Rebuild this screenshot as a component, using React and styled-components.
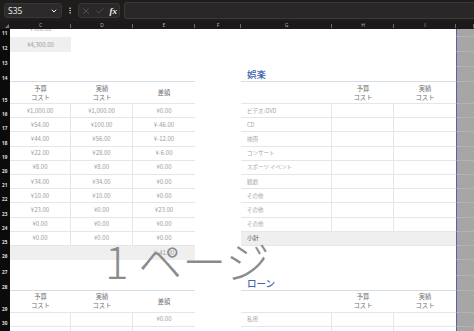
import React from 'react';
import styled, { createGlobalStyle } from 'styled-components';
import { X, Check, ChevronDown, EllipsisVertical } from 'lucide-react';

const Global = createGlobalStyle`
  html, body { margin: 0; padding: 0; background: #1f1c1c; overflow: hidden; }
  body { font-family: "Noto Sans CJK JP", "Noto Sans", sans-serif; }
`;

const LINE = '#e6e6e6';
const HEAD_LINE = '#d6dce8';

const Page = styled.div`
  position: relative;
  width: 474px;
  height: 331px;
  overflow: hidden;
  background: #1f1c1c;
`;

const FormulaBar = styled.div`
  height: 21px;
  display: flex;
  align-items: center;
  gap: 4px;
  padding: 0 0 0 4px;
  box-sizing: border-box;
`;

const NameBox = styled.div`
  width: 58px;
  height: 15px;
  box-sizing: border-box;
  display: flex;
  align-items: center;
  justify-content: space-between;
  padding: 0 3px 0 3px;
  background: #2c2a2a;
  border: 1px solid #393636;
  border-radius: 3px;
  color: #f2f2f2;
  font-family: "Open Sans", sans-serif;
  font-size: 8.5px;
`;

const Dots = styled.div`
  width: 8px;
  display: flex;
  justify-content: center;
  color: #cfcfcf;
`;

const ActionBox = styled.div`
  width: 42px;
  height: 15px;
  box-sizing: border-box;
  display: flex;
  align-items: center;
  justify-content: space-around;
  background: #2a2828;
  border: 1px solid #393636;
  border-radius: 3px;
`;

const Fx = styled.span`
  font-family: "Liberation Serif", serif;
  font-style: italic;
  font-weight: bold;
  font-size: 9px;
  color: #f0f0f0;
`;

const Input = styled.div`
  flex: 1;
  height: 15px;
  background: #292727;
  border: 1px solid #3b3838;
  border-right: none;
  border-radius: 3px 0 0 3px;
`;

const Sheet = styled.div`
  display: grid;
  grid-template-columns: 10px 61px 62px 62px 46px 91px 62px 62px 18px;
  grid-template-rows: 8px 8px 15px 15px 15px 22px repeat(10, 14.2px) 14px 16px 15px 22px 14px 14px;
`;

const Corner = styled.div`
  background: #1b1919;
  position: relative;
  &::after {
    content: '';
    position: absolute;
    right: 1px;
    bottom: 1px;
    border-left: 4px solid transparent;
    border-bottom: 4px solid #777;
  }
`;

const ColHead = styled.div`
  position: relative;
  background: #1b1919;
  color: #b8b8b8;
  font-family: "Open Sans", sans-serif;
  font-size: 5px;
  display: flex;
  align-items: center;
  justify-content: center;
  &::after {
    content: '';
    position: absolute;
    right: 0;
    top: 3px;
    height: 4px;
    border-right: 1px solid #6a6a6a;
  }
`;

const RowHead = styled.div`
  background: #0b0b0b;
  color: #e0e0e0;
  font-family: "Open Sans", sans-serif;
  font-weight: bold;
  font-size: 4.6px;
  display: flex;
  align-items: flex-end;
  padding: 0 0 1px 2px;
  box-sizing: border-box;
  overflow: hidden;
`;

const tone = {
  hdr: '#707070',
  val: '#9c9c9c',
  lbl: '#a8a8a8',
  sub: '#555',
  title: '#3f64b2',
};

const size = {
  hdr: '6.3px',
  val: '6px',
  lbl: '5.5px',
  sub: '6px',
  title: '9.5px',
};

const Cell = styled.div`
  box-sizing: border-box;
  display: flex;
  align-items: ${p => (p.$clip ? 'flex-start' : 'center')};
  justify-content: ${p => (p.$left ? 'flex-start' : 'center')};
  padding: 0 ${p => (p.$left ? '6px' : '2px')};
  background: ${p => (p.$fill ? '#efefef' : '#fff')};
  border-bottom: ${p => (p.$under ? `1px solid ${HEAD_LINE}` : p.$line ? `1px solid ${LINE}` : 'none')};
  border-right: ${p => (p.$div ? `1px solid ${LINE}` : 'none')};
  color: ${p => tone[p.$kind] || '#999'};
  font-size: ${p => size[p.$kind] || '6px'};
  font-weight: ${p => (p.$kind === 'title' ? 500 : 400)};
  line-height: ${p => (p.$kind === 'hdr' ? '9px' : '10px')};
  text-align: center;
  white-space: pre-line;
  overflow: hidden;
`;

const ClipText = styled.span`
  margin-top: -5px;
`;

const Gutter = styled.div`
  background: #a6a6a6;
  border-left: 1.5px solid #5a5fa9;
  border-bottom: ${p => (p.$line ? '1px solid #b3b3b3' : 'none')};
  box-sizing: border-box;
`;

const Watermark = styled.div`
  position: absolute;
  left: 105px;
  top: 238px;
  font-family: "Noto Sans CJK JP", sans-serif;
  font-weight: 300;
  font-size: 44px;
  line-height: 1;
  color: #8b8b8b;
  white-space: pre;
  pointer-events: none;
`;

const B = {};
const U = { under: true };
const hdr = text => ({ kind: 'hdr', text, line: true });
const val = (text, div) => ({ kind: 'val', text, div, line: true });
const lbl = text => ({ kind: 'lbl', text, left: true, div: true, line: true });

const money = [
  ['¥1,000.00', '¥1,000.00', '¥0.00'],
  ['¥54.00', '¥100.00', '¥-46.00'],
  ['¥44.00', '¥56.00', '¥-12.00'],
  ['¥22.00', '¥28.00', '¥-6.00'],
  ['¥8.00', '¥8.00', '¥0.00'],
  ['¥34.00', '¥34.00', '¥0.00'],
  ['¥10.00', '¥10.00', '¥0.00'],
  ['¥23.00', '¥0.00', '¥23.00'],
  ['¥0.00', '¥0.00', '¥0.00'],
  ['¥0.00', '¥0.00', '¥0.00'],
];

const entertainment = ['ビデオ/DVD', 'CD', '映画', 'コンサート', 'スポーツ イベント', '観劇', 'その他', 'その他', 'その他'];

const headerCells = withDiff => [
  hdr('予算\nコスト'),
  hdr('実績\nコスト'),
  withDiff ? hdr('差額') : B,
];

const rows = [
  { n: 11, cells: [{ kind: 'val', text: '¥300.00', clip: true }, B, B, B, B, B, B] },
  { n: 12, cells: [{ kind: 'val', text: '¥4,300.00', fill: true }, B, B, B, B, B, B] },
  { n: 13, cells: [B, B, B, B, B, B, B] },
  { n: 14, cells: [U, U, U, B, { kind: 'title', text: '娯楽', left: true, under: true }, U, U] },
  { n: 15, cells: [...headerCells(true), B, { line: true }, hdr('予算\nコスト'), hdr('実績\nコスト')] },
  ...money.map((m, i) => ({
    n: 16 + i,
    cells: [
      val(m[0], true),
      val(m[1], true),
      val(m[2]),
      B,
      ...(i < 9
        ? [lbl(entertainment[i]), val('', true), val('')]
        : [
            { kind: 'sub', text: '小計', left: true, fill: true, line: true },
            { kind: 'val', fill: true, line: true },
            { kind: 'val', fill: true, line: true },
          ]),
    ],
  })),
  {
    n: 26,
    cells: [
      { kind: 'val', fill: true },
      { kind: 'val', fill: true },
      { kind: 'val', text: '¥-41.00', fill: true },
      B, B, B, B,
    ],
  },
  { n: 27, cells: [B, B, B, B, B, B, B] },
  { n: 28, cells: [U, U, U, B, { kind: 'title', text: 'ローン', left: true, under: true }, U, U] },
  { n: 29, cells: [...headerCells(true), B, { line: true }, hdr('予算\nコスト'), hdr('実績\nコスト')] },
  { n: 30, cells: [val('', true), val('', true), val('¥0.00'), B, lbl('私用'), val('', true), val('')] },
  { n: 31, cells: [val('', true), val('', true), val(''), B, lbl(''), val('', true), val('')] },
];

const columns = ['C', 'D', 'E', 'F', 'G', 'H', 'I'];

export default function App() {
  return (
    <Page>
      <Global />
      <FormulaBar>
        <NameBox>
          S35
          <ChevronDown size={8} strokeWidth={3} color="#f0f0f0" />
        </NameBox>
        <Dots>
          <EllipsisVertical size={9} strokeWidth={2.5} />
        </Dots>
        <ActionBox>
          <X size={10} strokeWidth={1.4} color="#6c6c6c" />
          <Check size={10} strokeWidth={1.4} color="#6c6c6c" />
          <Fx>fx</Fx>
        </ActionBox>
        <Input />
      </FormulaBar>
      <Sheet>
        <Corner />
        {columns.map(c => (
          <ColHead key={c}>{c}</ColHead>
        ))}
        <ColHead />
        {rows.map(r => (
          <React.Fragment key={r.n}>
            <RowHead>{r.n}</RowHead>
            {r.cells.map((c, i) => (
              <Cell
                key={i}
                $kind={c.kind}
                $left={c.left}
                $fill={c.fill}
                $under={c.under}
                $line={c.line}
                $div={c.div}
                $clip={c.clip}
              >
                {c.clip ? <ClipText>{c.text}</ClipText> : c.text}
              </Cell>
            ))}
            <Gutter $line />
          </React.Fragment>
        ))}
      </Sheet>
      <Watermark>1 ページ</Watermark>
    </Page>
  );
}
